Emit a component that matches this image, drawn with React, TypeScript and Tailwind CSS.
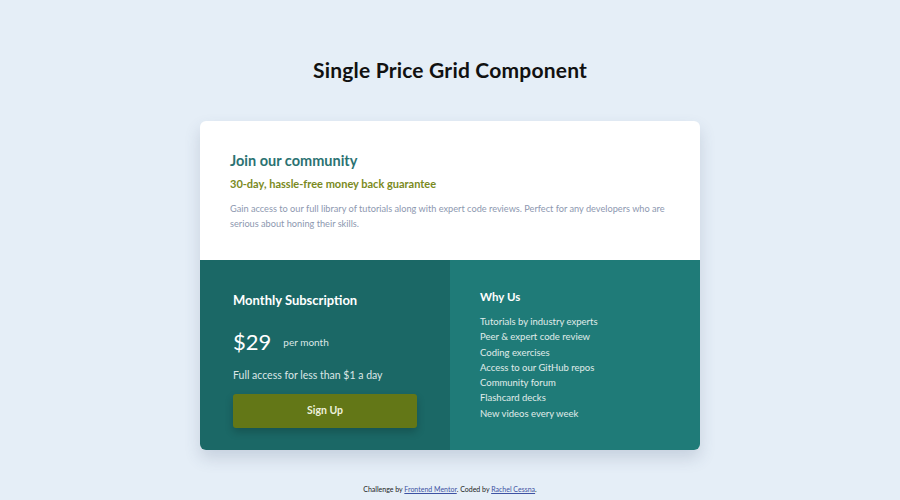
import React from "react";

const features = [
  "Tutorials by industry experts",
  "Peer & expert code review",
  "Coding exercises",
  "Access to our GitHub repos",
  "Community forum",
  "Flashcard decks",
  "New videos every week",
];

export default function App() {
  return (
    <div className="w-[900px] h-[500px] bg-[#e5eef7] flex flex-col items-center [font-family:Lato,'Liberation_Sans',sans-serif]">
      <h1 className="mt-[55px] text-[21px] leading-[29px] font-bold text-[#111] tracking-[0.2px]">
        Single Price Grid Component
      </h1>
      <div className="mt-[37px] w-[500px] rounded-[6px] overflow-hidden bg-white shadow-[0_8px_16px_rgba(60,80,110,0.18)]">
        <div className="h-[139px] pl-[30px] pr-[26px] pt-[30px]">
          <h2 className="text-[14.5px] leading-[20px] font-bold text-[#2b7272]">Join our community</h2>
          <p className="mt-[5px] text-[11px] leading-[16px] font-bold text-[#7a8a22]">
            30-day, hassle-free money back guarantee
          </p>
          <p className="mt-[10px] text-[9.2px] leading-[14.5px] text-[#8d98b0]">
            Gain access to our full library of tutorials along with expert code reviews. Perfect for any developers who are serious about honing their skills.
          </p>
        </div>
        <div className="flex h-[190px]">
          <div className="w-[250px] bg-[#1b6866] px-[33px] pt-[31px] text-white">
            <h3 className="text-[13px] leading-[18px] font-bold">Monthly Subscription</h3>
            <div className="mt-[20px] flex items-center h-[26px]">
              <span className="text-[22px] leading-[26px]">$29</span>
              <span className="ml-[12px] text-[10px] text-[#dbe7e6]">per month</span>
            </div>
            <p className="mt-[13px] text-[10.5px] leading-[14px] text-[#dbe7e6]">Full access for less than $1 a day</p>
            <button className="mt-[12px] w-[184px] h-[34px] rounded-[3px] bg-[#637717] text-[10.5px] font-bold text-[#eef2dc] shadow-[0_4px_8px_rgba(0,0,0,0.2)]">
              Sign Up
            </button>
          </div>
          <div className="flex-1 bg-[#1f7b78] px-[30px] pt-[29px] text-white">
            <h3 className="text-[11.5px] leading-[16px] font-bold">Why Us</h3>
            <ul className="mt-[9px] text-[9.5px] leading-[15.3px] text-[#e0ecea]">
              {features.map((f) => (
                <li key={f}>{f}</li>
              ))}
            </ul>
          </div>
        </div>
      </div>
      <p className="mt-[34px] text-[7px] leading-[10px] text-[#222]">
        Challenge by <a className="text-[#3e52a3] underline">Frontend Mentor</a>. Coded by{" "}
        <a className="text-[#3e52a3] underline">Rachel Cessna</a>.
      </p>
    </div>
  );
}
